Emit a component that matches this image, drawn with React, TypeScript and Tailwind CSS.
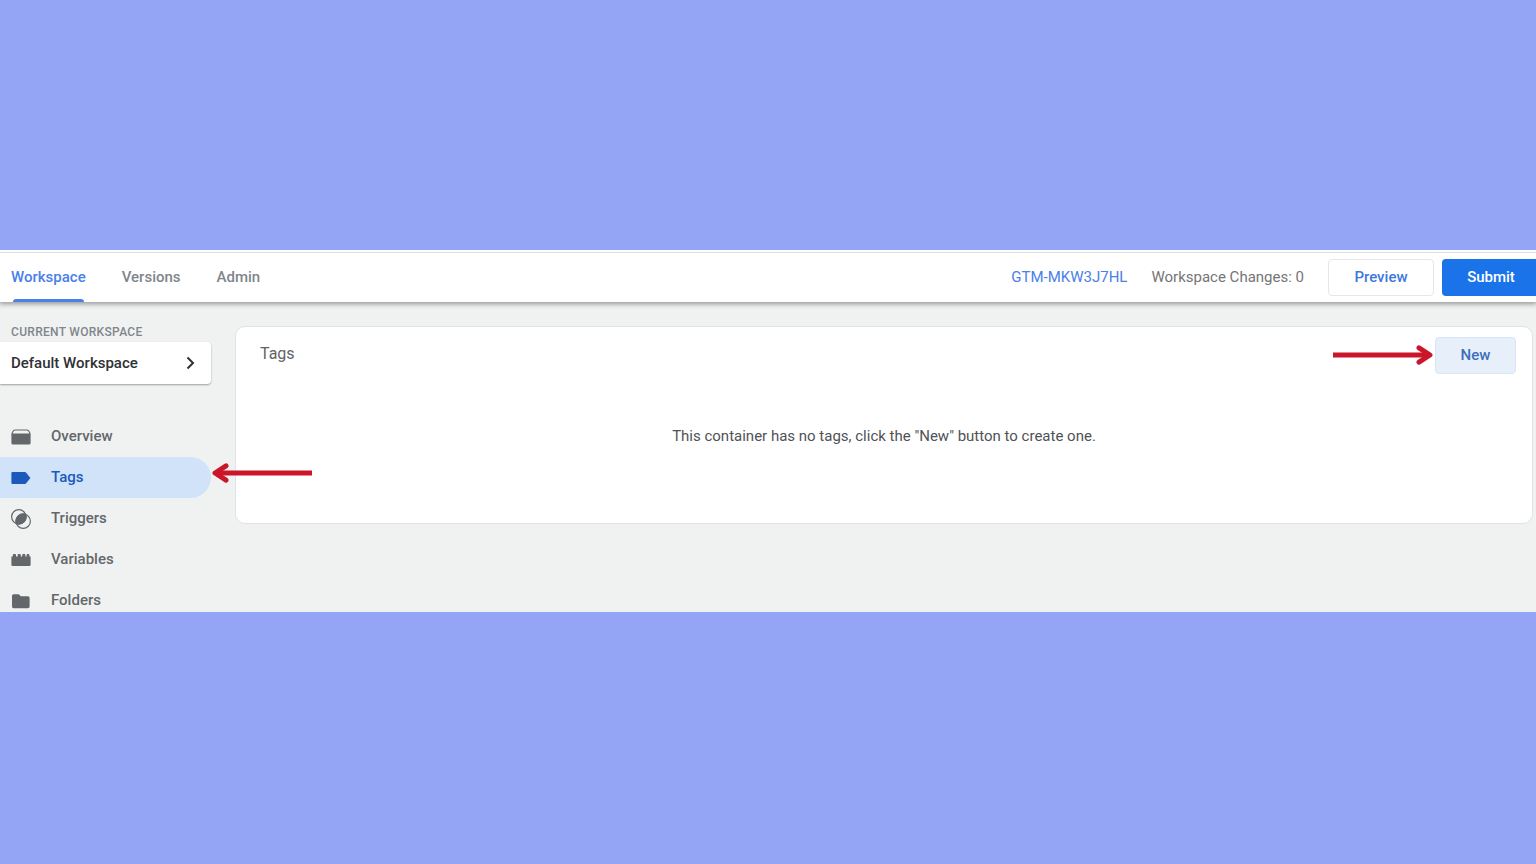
import React from 'react';
import { clsx } from 'clsx';

const OverviewIcon = () => (
  <svg viewBox="0 0 20 20" className="w-5 h-5" fill="currentColor">
    <path d="M1 7.500C1.400 4.600 2.400 3 4.400 3h11.200c2 0 3 1.600 3.400 4.500" fill="none" stroke="currentColor" strokeWidth="1.2" />
    <path d="M1.200 6.600h17.600a.8.8 0 0 1 .8.8v8.600a1.600 1.600 0 0 1-1.600 1.600H2a1.600 1.600 0 0 1-1.600-1.600V7.400a.8.8 0 0 1 .8-.8z" />
  </svg>
);

const TagIcon = () => (
  <svg viewBox="0 0 20 20" className="w-5 h-5" fill="currentColor">
    <path d="M1.400 4h12.400c.6 0 1 .2 1.400.7L19.400 10l-4.200 5.300c-.4.5-.8.7-1.400.7H1.400a1 1 0 0 1-1-1V5a1 1 0 0 1 1-1z" />
  </svg>
);

const TriggerIcon = () => (
  <svg viewBox="0 0 20 20" className="w-5 h-5" fill="none" stroke="currentColor" strokeWidth="1.2">
    <circle cx="7.800" cy="7.800" r="7.200" />
    <circle cx="12.200" cy="12.200" r="7.200" />
    <path d="M14.600 5.400A7.200 7.200 0 0 0 5.400 14.600A7.200 7.200 0 0 0 14.600 5.400z" fill="currentColor" />
  </svg>
);

const VariableIcon = () => (
  <svg viewBox="0 0 20 20" className="w-5 h-5" fill="currentColor">
    <path d="M.4 6.600h1.400V5q0-1 1-1h1.200q1 0 1 1v1.600h1.600V5q0-1 1-1h1.200q1 0 1 1v1.600h1.400V5q0-1 1-1h1.200q1 0 1 1v1.600h1.200V5q0-1 1-1h.8q1 0 1 1v1.600h1.200v8.200a1.200 1.200 0 0 1-1.200 1.200H1.600a1.200 1.200 0 0 1-1.200-1.200z" />
  </svg>
);

const FolderIcon = () => (
  <svg viewBox="0 0 20 20" className="w-5 h-5" fill="currentColor">
    <path d="M2.600 3.200h5.200l2 2h7.200a1.600 1.600 0 0 1 1.600 1.600v8.800a1.600 1.600 0 0 1-1.600 1.600H2.600A1.600 1.600 0 0 1 1 15.600V4.800A1.600 1.600 0 0 1 2.600 3.200z" />
  </svg>
);

const Arrow: React.FC<{ className?: string }> = ({ className }) => (
  <svg viewBox="0 0 100 20" className={clsx('absolute w-[100px] h-5 pointer-events-none', className)} fill="none" stroke="#cb1528">
    <path d="M0 10h96" strokeWidth="5" />
    <path d="M86 2.800L97 10L86 17.200" strokeWidth="5" strokeLinecap="round" strokeLinejoin="round" />
  </svg>
);

const tabs = ['Workspace', 'Versions', 'Admin'];

const navItems = [
  { name: 'Overview', icon: OverviewIcon },
  { name: 'Tags', icon: TagIcon },
  { name: 'Triggers', icon: TriggerIcon },
  { name: 'Variables', icon: VariableIcon },
  { name: 'Folders', icon: FolderIcon },
];

const Header = () => (
  <header className="relative z-10 bg-white pt-0.5 shadow-[0_1px_5px_1px_rgba(0,0,0,0.38)]">
    <div className="flex items-center justify-between h-[50px] border-t border-[#dfe2e8]">
      <nav className="flex self-stretch gap-9 pl-[11px] text-[15px] font-medium">
        {tabs.map((tab, i) => (
          <a key={tab} href="#" className={clsx('relative flex items-center', i === 0 ? 'text-[#4a80e8]' : 'text-[#80868b]')}>
            {tab}
            {i === 0 && <span className="absolute bottom-0 inset-x-0.5 h-[3px] rounded-t bg-[#4a80e8]"></span>}
          </a>
        ))}
      </nav>
      <div className="flex items-center text-[15px]">
        <a href="#" className="text-[#4a80e8]">GTM-MKW3J7HL</a>
        <span className="ml-6 text-[#757575]">Workspace Changes: 0</span>
        <button className="ml-6 w-[106px] h-[37px] rounded border border-[#e4e6ea] font-medium text-[#3f78dc]">Preview</button>
        <button className="ml-2 -mr-1 w-[98px] h-[37px] rounded bg-[#1a73e8] font-medium text-white">Submit</button>
      </div>
    </div>
  </header>
);

const Sidebar = () => (
  <aside className="w-[211px] shrink-0 pt-[21px]">
    <div className="pl-[11px] text-xs leading-[18px] font-medium tracking-wide text-[#80868b]">CURRENT WORKSPACE</div>
    <button className="mt-px flex items-center justify-between w-full h-[42px] pl-[11px] pr-3.5 rounded-r bg-white text-[15px] font-medium text-[#303134] shadow-[0_1px_2px_rgba(0,0,0,0.35)]">
      Default Workspace
      <svg viewBox="0 0 14 14" className="w-3.5 h-3.5" fill="none" stroke="currentColor" strokeWidth="2">
        <path d="M4.500 1.500L10 7L4.500 12.500" />
      </svg>
    </button>
    <nav className="mt-8 -mb-[9px]">
      {navItems.map(({ name, icon: Icon }) => (
        <a
          key={name}
          href="#"
          className={clsx(
            'relative flex items-center h-[41px] gap-5 pl-[11px] rounded-r-full text-[15px] font-medium',
            name === 'Tags' ? 'bg-[#d0e3f9] text-[#1b5abc]' : 'text-[#63676b]'
          )}
        >
          <Icon />
          {name}
          {name === 'Tags' && <Arrow className="left-full top-1.5 ml-px rotate-180" />}
        </a>
      ))}
    </nav>
  </aside>
);

export default function App() {
  return (
    <div className="min-h-screen pt-[250px] bg-[#94a5f6] font-['Roboto',sans-serif]">
      <div className="overflow-hidden bg-[#f0f2f2]">
        <Header />
        <div className="flex items-start gap-6 pr-[3px]">
          <Sidebar />
          <main className="mt-6 flex-1 min-h-[198px] rounded-[10px] border border-[#dfe2e8] bg-white">
            <div className="flex items-start justify-between pl-6 pr-4 pt-2.5">
              <h1 className="pt-[5px] text-base leading-6 text-[#5f6368]">Tags</h1>
              <div className="relative">
                <Arrow className="right-full top-2 mr-0.5" />
                <button className="block w-[81px] h-[37px] rounded border border-[#d9e4f8] bg-[#e7effb] text-[15px] font-medium text-[#3d6dbd]">New</button>
              </div>
            </div>
            <p className="mt-[52px] text-center text-[15px] leading-5 text-[#505256]">
              This container has no tags, click the "New" button to create one.
            </p>
          </main>
        </div>
      </div>
    </div>
  );
}
